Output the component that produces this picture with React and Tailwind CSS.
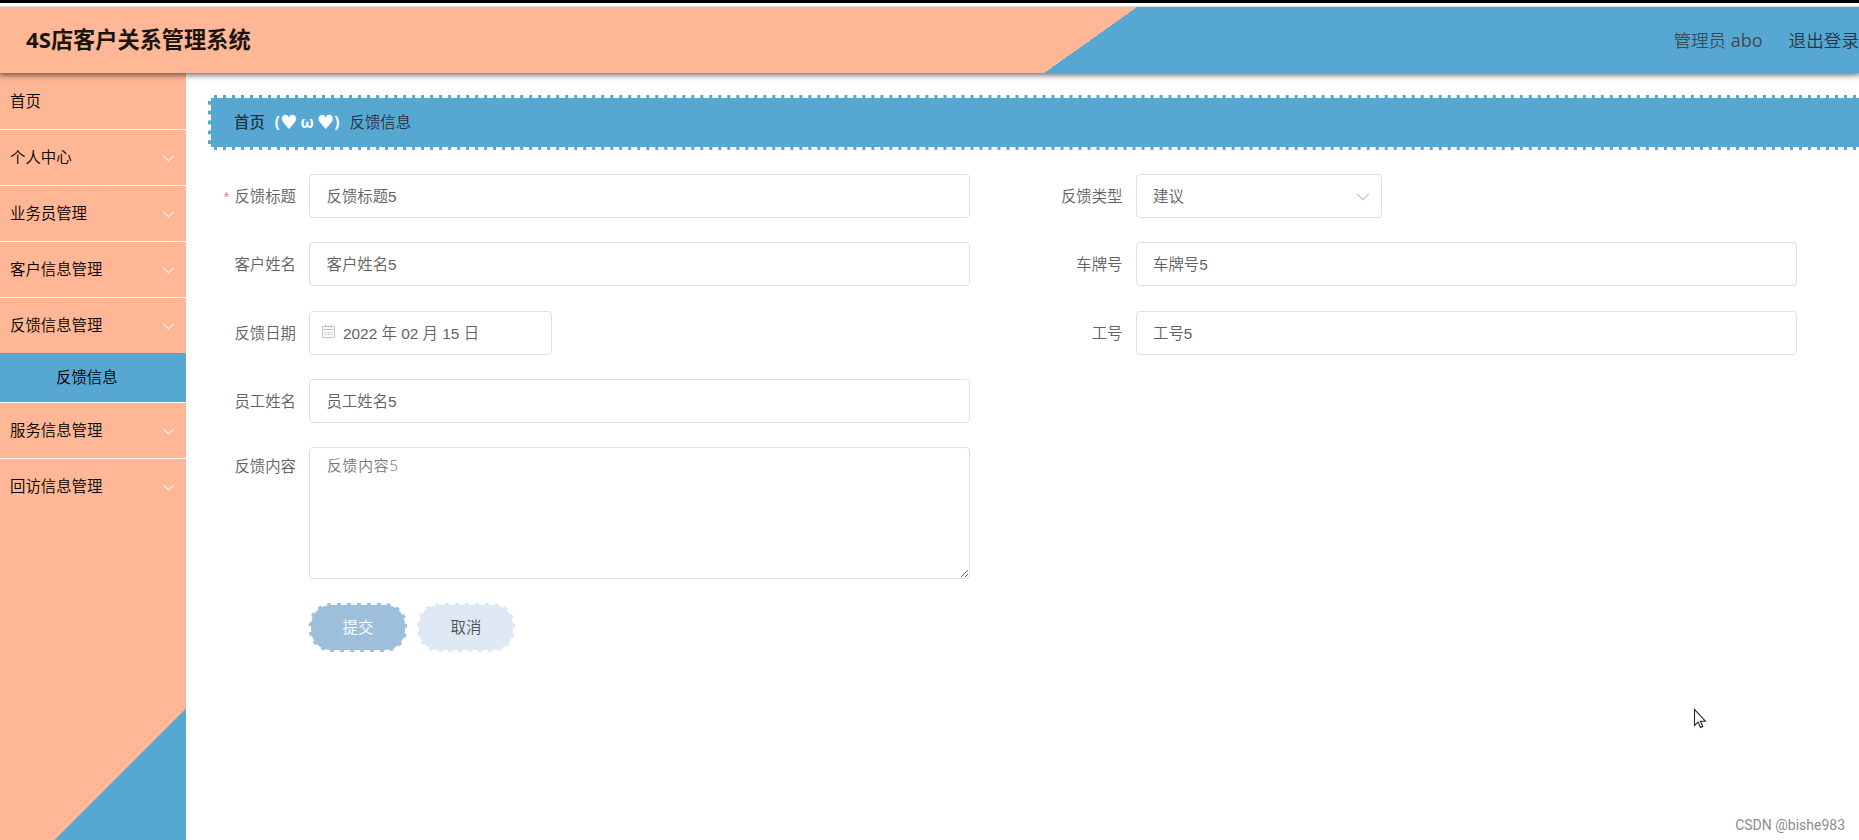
import { ChevronDown } from "lucide-react";

// Sidebar menu configuration
const menuItems = [
  { label: "首页", leaf: true },
  { label: "个人中心" },
  { label: "业务员管理" },
  { label: "客户信息管理" },
  { label: "反馈信息管理", children: ["反馈信息"] },
  { label: "服务信息管理" },
  { label: "回访信息管理" },
];

function CalendarIcon() {
  return (
    <svg viewBox="0 0 15 15" className="mb-[3px] h-[15px] w-[15px] shrink-0" fill="none" stroke="#c0c4cc" strokeWidth="1">
      <path d="M1.5 2.5h12v11h-12zM1.5 5.5h12M4.5 0.5v3M10.5 0.5v3M3.5 8.5h2M6.5 8.5h2M9.5 8.5h2M3.5 10.5h2M6.5 10.5h2M9.5 10.5h2" />
    </svg>
  );
}

function Header() {
  return (
    <header className="relative z-10 flex h-[66px] shrink-0 items-center justify-between bg-[linear-gradient(144.6deg,#ffb795_658.7px,#57a7d3_658.7px)] pl-[26px] shadow-[0_1px_6px_1px_rgba(0,0,0,0.6)]">
      <h1 className="font-['Noto_Sans','Noto_Sans_CJK_SC',sans-serif] text-[22.2px] font-bold text-[#1a1412]">
        4S店客户关系管理系统
      </h1>
      <div className="flex items-center gap-[26px] font-['Open_Sans','Noto_Sans_CJK_SC',sans-serif] text-[17.6px] font-[350] whitespace-nowrap">
        <span className="text-[#3f4b52]">
          管理员 <span className="text-[18px] font-normal">abo</span>
        </span>
        <span className="text-[#2a353c]">退出登录</span>
      </div>
    </header>
  );
}

function Sidebar() {
  return (
    <aside className="w-[186px] shrink-0 bg-[linear-gradient(135deg,#ffb795_581.2px,#57a7d3_581.2px)]">
      <ul className="text-[15.4px] text-black">
        {menuItems.map((item, i) => (
          <li key={item.label} className={i < menuItems.length - 1 ? "border-b border-white" : ""}>
            <div className={`flex items-center justify-between pt-px pr-[8px] pl-[10px] ${item.leaf ? "h-[56px]" : "h-[55px]"}`}>
              <span>{item.label}</span>
              {!item.leaf && <ChevronDown className="h-[19px] w-[19px] text-white/90" strokeWidth={1.4} />}
            </div>
            {item.children?.map((child) => (
              <div key={child} className="flex h-[49px] items-center bg-[#57a7d3] pl-[56px]">
                {child}
              </div>
            ))}
          </li>
        ))}
      </ul>
    </aside>
  );
}

function Breadcrumb() {
  return (
    <nav className="flex h-[55px] w-[1690px] items-center border-[3px] border-dashed border-white bg-[#57a7d3] pt-px pl-[23px] text-[15.4px] whitespace-nowrap">
      <span className="font-medium text-[#21343f]">首页</span>
      <span className="mr-[10px] ml-[10px] flex items-center font-['Noto_Sans',sans-serif] font-bold text-white">
        (<span className="font-['DejaVu_Sans',sans-serif] text-[19.5px] leading-none">♥</span>
        <span className="mx-[3px]">ω</span>
        <span className="font-['DejaVu_Sans',sans-serif] text-[19.5px] leading-none">♥</span>)
      </span>
      <span className="text-[#21343f]">反馈信息</span>
    </nav>
  );
}

const inputClass =
  "block h-[44px] w-full rounded-[4px] border border-[#dcdfe6] bg-white px-[16.5px] pb-[2px] text-[15.4px] text-[#606266] outline-none";

function Field({ label, required, top, children }) {
  return (
    <div className="flex">
      <label
        className={`flex w-[101px] shrink-0 items-center justify-end pr-[13px] text-[15.4px] text-[#606266] ${
          top ? "h-[39px]" : "h-[44px] pt-px"
        }`}
      >
        {required && <span className="mr-[5px] text-[#f0887c]">*</span>}
        {label}
      </label>
      <div className="w-[661px]">{children}</div>
    </div>
  );
}

export default function App() {
  return (
    <div className="flex h-screen w-full flex-col overflow-hidden bg-white font-['Liberation_Sans','Noto_Sans_CJK_SC',sans-serif] font-[350]">
      {/* Window edge above the page */}
      <div className="relative z-20 h-[7px] shrink-0 border-t-[3px] border-b border-t-black border-b-[#dcdcdc] bg-white" />

      <Header />

      <div className="flex min-h-0 flex-1">
        <Sidebar />

        <main className="min-w-0 flex-1 overflow-hidden pt-[22px] pl-[22px]">
          <Breadcrumb />

          <form className="mt-[24px]" onSubmit={(e) => e.preventDefault()}>
            <div className="grid grid-cols-[826.5px_1fr] gap-y-[24.3px]">
              <Field label="反馈标题" required>
                <input className={inputClass} defaultValue="反馈标题5" />
              </Field>
              <Field label="反馈类型">
                <div className="flex h-[44px] w-[246px] items-center justify-between rounded-[4px] border border-[#dcdfe6] pt-px pr-[7px] pl-[16.5px] text-[15.4px] text-[#606266]">
                  建议
                  <ChevronDown className="h-[22px] w-[22px] text-[#c0c4cc]" strokeWidth={1.2} />
                </div>
              </Field>

              <Field label="客户姓名">
                <input className={inputClass} defaultValue="客户姓名5" />
              </Field>
              <Field label="车牌号">
                <input className={inputClass} defaultValue="车牌号5" />
              </Field>

              <Field label="反馈日期">
                <div className="flex h-[44px] w-[243px] items-center gap-[7px] rounded-[4px] border border-[#dcdfe6] pt-px pl-[11px] text-[15.4px] text-[#606266]">
                  <CalendarIcon />
                  <span>2022 年 02 月 15 日</span>
                </div>
              </Field>
              <Field label="工号">
                <input className={inputClass} defaultValue="工号5" />
              </Field>

              <Field label="员工姓名">
                <input className={inputClass} defaultValue="员工姓名5" />
              </Field>
              <div />

              <Field label="反馈内容" top>
                <textarea
                  className="block h-[132px] w-full resize rounded-[4px] border border-[#dcdfe6] px-[17px] py-[6px] font-['Noto_Sans','Noto_Sans_CJK_SC',sans-serif] text-[14.8px] leading-[23px] tracking-[0.8px] text-[#757575] outline-none"
                  defaultValue="反馈内容5"
                />
              </Field>
            </div>

            {/* Form actions */}
            <div className="mt-[24px] flex gap-[10px] pl-[101px] text-[15.4px]">
              <button type="submit" className="h-[49px] w-[98px] rounded-[22px] border-2 border-dashed border-white bg-[#9ebfdb] text-white">
                提交
              </button>
              <button type="button" className="h-[49px] w-[98px] rounded-[22px] border-2 border-dashed border-white bg-[#dfe9f5] text-[#505255]">
                取消
              </button>
            </div>
          </form>
        </main>
      </div>

      {/* Mouse pointer */}
      <svg className="absolute top-[708px] left-[1693px] h-[21px] w-[14px]" viewBox="0 0 14 21" fill="#fff" stroke="#222" strokeWidth="1.1">
        <path d="M1.5 1.5v16l3.6-3.4 2.4 5.4 2.3-1-2.4-5.3h5z" />
      </svg>

      <span className="absolute right-[14px] bottom-[6px] font-['Roboto',sans-serif] text-[14px] leading-[18px] font-normal text-[#8c8c8c]">
        CSDN @bishe983
      </span>
    </div>
  );
}
